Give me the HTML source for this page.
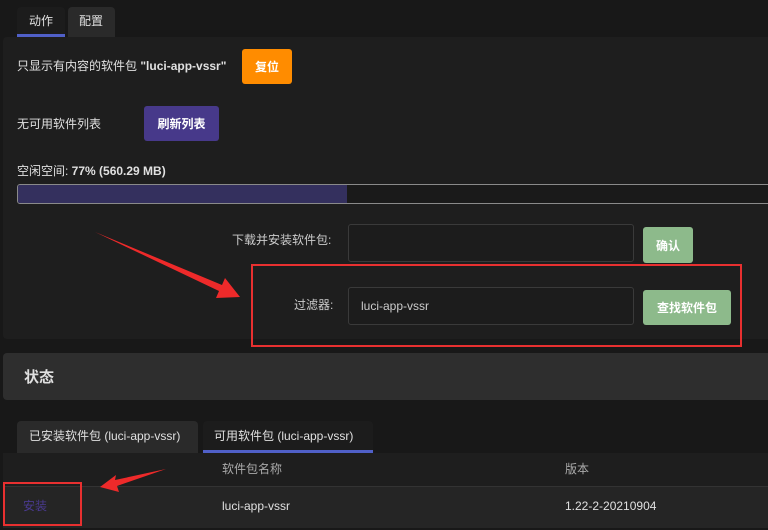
<!DOCTYPE html>
<html><head><meta charset="utf-8"><style>
*{margin:0;padding:0;box-sizing:border-box}
body{width:768px;height:530px;background:#181818;font-family:"Liberation Sans","Noto Sans CJK SC",sans-serif;font-size:12px;color:#e0e0e0;position:relative;overflow:hidden}
.a{position:absolute}
.btn{position:absolute;border-radius:3px;color:#fff;font-size:12px;font-weight:bold;display:flex;align-items:center;justify-content:center}
.inp{position:absolute;background:#1c1c1c;border:1px solid #3a3a3a;border-radius:3px;color:#ccc;font-size:12px;display:flex;align-items:center;padding-left:12px}
.t{position:absolute;white-space:nowrap;line-height:14px}
</style></head><body>
<div class="a" style="left:3px;top:37px;width:770px;height:302px;background:#1e1e1e;border-radius:4px"></div>
<div class="a" style="left:17px;top:7px;width:48px;height:30px;background:#1c1c1c;border-radius:4px 4px 0 0;border-bottom:3px solid #5060c8"></div>
<div class="t" style="left:29px;top:14px">动作</div>
<div class="a" style="left:68px;top:7px;width:47px;height:30px;background:#2a2a2a;border-radius:4px 4px 0 0"></div>
<div class="t" style="left:79px;top:14px">配置</div>

<div class="t" style="left:17px;top:59px">只显示有内容的软件包 <b>"luci-app-vssr"</b></div>
<div class="btn" style="left:242px;top:49px;width:50px;height:35px;background:#ff8c00">复位</div>
<div class="t" style="left:17px;top:117px">无可用软件列表</div>
<div class="btn" style="left:144px;top:106px;width:75px;height:35px;background:#47398a">刷新列表</div>
<div class="t" style="left:17px;top:164px">空闲空间: <b>77% (560.29 MB)</b></div>
<div class="a" style="left:17px;top:184px;width:760px;height:20px;border:1px solid #8a8a8a;border-radius:3px;background:#1a1a1a;overflow:hidden"><div style="width:329px;height:100%;background:#34305e"></div></div>

<div class="t" style="left:232px;top:233px;color:#ccc">下载并安装软件包:</div>
<div class="inp" style="left:348px;top:224px;width:286px;height:38px"></div>
<div class="btn" style="left:643px;top:227px;width:50px;height:36px;background:#8dba8b">确认</div>
<div class="t" style="left:294px;top:298px;color:#ccc">过滤器:</div>
<div class="inp" style="left:348px;top:287px;width:286px;height:38px">luci-app-vssr</div>
<div class="btn" style="left:643px;top:290px;width:88px;height:35px;background:#8dba8b">查找软件包</div>
<div class="a" style="left:251px;top:264px;width:491px;height:83px;border:2px solid #e83030"></div>

<div class="a" style="left:3px;top:353px;width:770px;height:47px;background:#2e2e2e;border-radius:4px"></div>
<div class="t" style="left:24px;top:369px;font-size:15px;font-weight:bold;line-height:17px">状态</div>

<div class="a" style="left:17px;top:421px;width:181px;height:32px;background:#2a2a2a;border-radius:4px 4px 0 0"></div>
<div class="t" style="left:29px;top:429px">已安装软件包 (luci-app-vssr)</div>
<div class="a" style="left:203px;top:421px;width:170px;height:32px;background:#1c1c1c;border-radius:4px 4px 0 0;border-bottom:3px solid #5060c8"></div>
<div class="t" style="left:214px;top:429px">可用软件包 (luci-app-vssr)</div>
<div class="a" style="left:3px;top:453px;width:770px;height:33px;background:#1e1e1e"></div>
<div class="t" style="left:222px;top:462px;color:#aaa">软件包名称</div>
<div class="t" style="left:565px;top:462px;color:#aaa">版本</div>
<div class="a" style="left:3px;top:486px;width:770px;height:42px;background:#252525;border-top:1px solid #333"></div>
<div class="t" style="left:23px;top:499px;color:#4a3a90">安装</div>
<div class="t" style="left:222px;top:499px">luci-app-vssr</div>
<div class="t" style="left:565px;top:499px">1.22-2-20210904</div>
<div class="a" style="left:3px;top:482px;width:79px;height:44px;border:2px solid #e83030"></div>

<svg class="a" style="left:0;top:0" width="768" height="530">
<polygon points="95,232 222,285 225,278 240,297 216,298 219,291" fill="#ee2a2a"/>
<polygon points="166,469 115,480 116,475 100,487 119,492 117,486" fill="#ee2a2a"/>
</svg>
</body></html>
